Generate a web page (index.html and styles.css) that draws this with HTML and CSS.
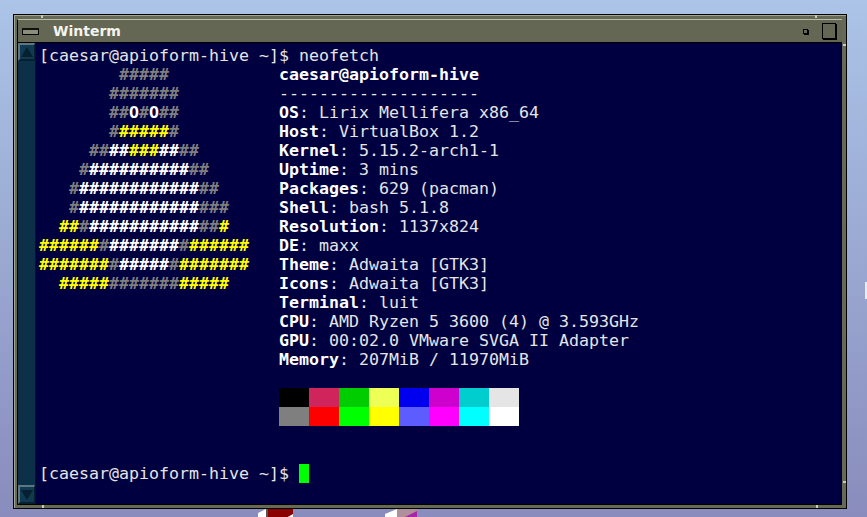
FILE: index.html
```html
<!DOCTYPE html>
<html lang="en">
<head>
    <meta charset="UTF-8">
    <title>Winterm</title>
    <link rel="stylesheet" href="styles.css">
</head>
<body>
    <svg class="desk-icon icon-red" width="36" height="10" viewBox="0 0 36 10">
        <path d="M0 10V5L8 1V10Z" fill="#fff"/>
        <rect x="8" y="0" width="2" height="10" fill="#555"/>
        <rect x="10" y="0" width="25" height="10" fill="#8a0000"/>
        <path d="M35 6L28 10H35Z" fill="#fff"/>
    </svg>
    <svg class="desk-icon icon-purple" width="34" height="10" viewBox="0 0 34 10">
        <path d="M0 10V6L12 1V10Z" fill="#fff"/>
        <path d="M12 0H32V4L18 10H12Z" fill="#b08f9c"/>
        <path d="M18 10L32 3V10Z" fill="#a826a8"/>
    </svg>
    <div class="desk-scrap"></div>

    <div class="window">
        <i class="notch notch-tl"></i>
        <i class="notch notch-tr"></i>
        <i class="notch notch-bl"></i>
        <i class="notch notch-br"></i>
        <i class="notch-h notch-rt"></i>
        <i class="notch-h notch-rb"></i>

        <div class="titlebar">
            <div class="menu-btn"></div>
            <div class="title">Winterm</div>
            <div class="min-btn"></div>
            <div class="max-btn"></div>
        </div>

        <div class="client">
            <div class="scrollbar">
                <div class="arrow arrow-up"><svg width="12" height="10" viewBox="0 0 12 10"><path d="M6 0L12 10H0Z"/></svg></div>
                <div class="track"></div>
                <div class="arrow arrow-down"><svg width="12" height="10" viewBox="0 0 12 10"><path d="M0 0H12L6 10Z"/></svg></div>
            </div>
            <div class="term">
<pre>[caesar@apioform-hive ~]$ neofetch
<b class="g">        #####           </b><b>caesar@apioform-hive</b>
<b class="g">       #######          </b>--------------------
<b class="g">       ##</b><b>O</b><b class="g">#</b><b>O</b><b class="g">##          </b><b>OS</b>: Lirix Mellifera x86_64
<b class="g">       #</b><b class="y">#####</b><b class="g">#          </b><b>Host</b>: VirtualBox 1.2
<b class="g">     ##</b><b>##</b><b class="y">###</b><b>##</b><b class="g">##        </b><b>Kernel</b>: 5.15.2-arch1-1
<b class="g">    #</b><b>##########</b><b class="g">##       </b><b>Uptime</b>: 3 mins
<b class="g">   #</b><b>############</b><b class="g">##      </b><b>Packages</b>: 629 (pacman)
<b class="g">   #</b><b>############</b><b class="g">###     </b><b>Shell</b>: bash 5.1.8
<b class="y">  ##</b><b class="g">#</b><b>###########</b><b class="g">##</b><b class="y">#</b>     <b>Resolution</b>: 1137x824
<b class="y">######</b><b class="g">#</b><b>#######</b><b class="g">#</b><b class="y">######</b>   <b>DE</b>: maxx
<b class="y">#######</b><b class="g">#</b><b>#####</b><b class="g">#</b><b class="y">#######</b>   <b>Theme</b>: Adwaita [GTK3]
<b class="y">  #####</b><b class="g">#######</b><b class="y">#####</b>     <b>Icons</b>: Adwaita [GTK3]
                        <b>Terminal</b>: luit
                        <b>CPU</b>: AMD Ryzen 5 3600 (4) @ 3.593GHz
                        <b>GPU</b>: 00:02.0 VMware SVGA II Adapter
                        <b>Memory</b>: 207MiB / 11970MiB
</pre>
                <div class="palette">
                    <span class="swatch c0"></span><span class="swatch c1"></span><span class="swatch c2"></span><span class="swatch c3"></span>
                    <span class="swatch c4"></span><span class="swatch c5"></span><span class="swatch c6"></span><span class="swatch c7"></span>
                    <span class="swatch c8"></span><span class="swatch c9"></span><span class="swatch c10"></span><span class="swatch c11"></span>
                    <span class="swatch c12"></span><span class="swatch c13"></span><span class="swatch c14"></span><span class="swatch c15"></span>
                </div>
                <div class="prompt"><pre>[caesar@apioform-hive ~]$ </pre><span class="cursor"></span></div>
            </div>
        </div>
    </div>
</body>
</html>
```

FILE: styles.css
```css
:root {
    --frame: #666956;
    --frame-light: #a3a692;
    --bar: #0c3047;
    --bar-light: #5f7785;
    --term-bg: #000040;
}

html, body {
    height: 100%;
}

body {
    margin: 0;
    overflow: hidden;
    background: linear-gradient(#abc4e7, #898cbc);
    font-family: "DejaVu Sans", sans-serif;
}

.desk-icon {
    position: absolute;
    top: 508px;
}

.icon-red {
    left: 258px;
}

.icon-purple {
    left: 385px;
}

.desk-scrap {
    position: absolute;
    left: 865px;
    top: 282px;
    width: 2px;
    height: 17px;
    background: #e4edf8;
}

/* window frame */
.window {
    position: absolute;
    left: 13px;
    top: 14px;
    width: 834px;
    height: 495px;
    box-sizing: border-box;
    border: 1px solid #000;
    padding: 4px 4px 3px 3px;
    background: var(--frame);
    box-shadow: inset 1px 1px 0 var(--frame-light);
    display: flex;
    flex-direction: column;
}

.notch {
    position: absolute;
    width: 2px;
    height: 3px;
    background: #c9ccb8;
}

.notch-h {
    position: absolute;
    width: 3px;
    height: 2px;
    background: #c9ccb8;
    right: 0;
}

.notch-tl { left: 27px; top: 0; }
.notch-tr { left: 801px; top: 0; }
.notch-bl { left: 28px; bottom: 0; }
.notch-br { left: 802px; bottom: 0; }
.notch-rt { top: 29px; }
.notch-rb { top: 466px; }

.titlebar {
    height: 24px;
    flex: none;
    display: flex;
    align-items: center;
    background: #646753;
    border-top: 1px solid #b9bca8;
    border-bottom: 1px solid #000;
    border-left: 1px solid #000;
    box-sizing: border-box;
    padding: 0 4px;
}

.menu-btn {
    width: 17px;
    height: 7px;
    box-sizing: border-box;
    border: 1px solid #000;
    border-top: 2px solid #111;
    background: #8a8d78;
    margin: 0 14px 0 0;
}

.title {
    flex: 1;
    color: #f4f4ee;
    font-weight: bold;
    font-size: 14px;
    line-height: 22px;
}

.min-btn {
    width: 3px;
    height: 3px;
    border: 1px solid #000;
    box-shadow: 1px 1px 0 #000;
    margin-right: 14px;
}

.max-btn {
    width: 12px;
    height: 14px;
    border: 1px solid #000;
    box-shadow: 1px 1px 0 #000;
    margin-right: 2px;
}

.client {
    flex: 1;
    display: flex;
    min-height: 0;
    border-bottom: 1px solid #000;
    border-left: 1px solid #000;
    border-right: 1px solid #000;
}

.scrollbar {
    width: 18px;
    flex: none;
    display: flex;
    flex-direction: column;
    box-sizing: border-box;
    border-right: 1px solid #041420;
    background: var(--bar);
}

.track {
    flex: 1;
}

.arrow {
    height: 18px;
    flex: none;
    box-sizing: border-box;
    display: flex;
    align-items: center;
    justify-content: center;
    background: #103a52;
    border-top: 2px solid var(--bar-light);
    border-left: 2px solid var(--bar-light);
    border-right: 1px solid #06202f;
    border-bottom: 2px solid #06202f;
}

.arrow svg {
    fill: #07202f;
}

.arrow-down {
    height: 19px;
}

/* terminal text */
.term {
    flex: 1;
    background: var(--term-bg);
    color: #e5e5e5;
    padding: 3px 0 0 3px;
    font-family: "DejaVu Sans Mono", monospace;
    font-size: 16.61px;
    line-height: 19px;
}

pre {
    margin: 0;
    font: inherit;
}

b {
    color: #fff;
}

b.g {
    color: #7f7f7f;
}

b.y {
    color: #ff0;
}

.palette {
    display: grid;
    grid-template-columns: repeat(8, 30px);
    grid-auto-rows: 19px;
    margin: 19px 0 0 240px;
}

.c0 { background: #000; }
.c1 { background: #d0245c; }
.c2 { background: #00cd00; }
.c3 { background: #ef5; }
.c4 { background: #00e; }
.c5 { background: #cd00cd; }
.c6 { background: #00cdcd; }
.c7 { background: #e5e5e5; }
.c8 { background: #7f7f7f; }
.c9 { background: #f00; }
.c10 { background: #0f0; }
.c11 { background: #ff0; }
.c12 { background: #5c5cff; }
.c13 { background: #f0f; }
.c14 { background: #0ff; }
.c15 { background: #fff; }

.prompt {
    display: flex;
    margin-top: 38px;
}

.cursor {
    width: 10px;
    height: 19px;
    background: #0f0;
}
```
